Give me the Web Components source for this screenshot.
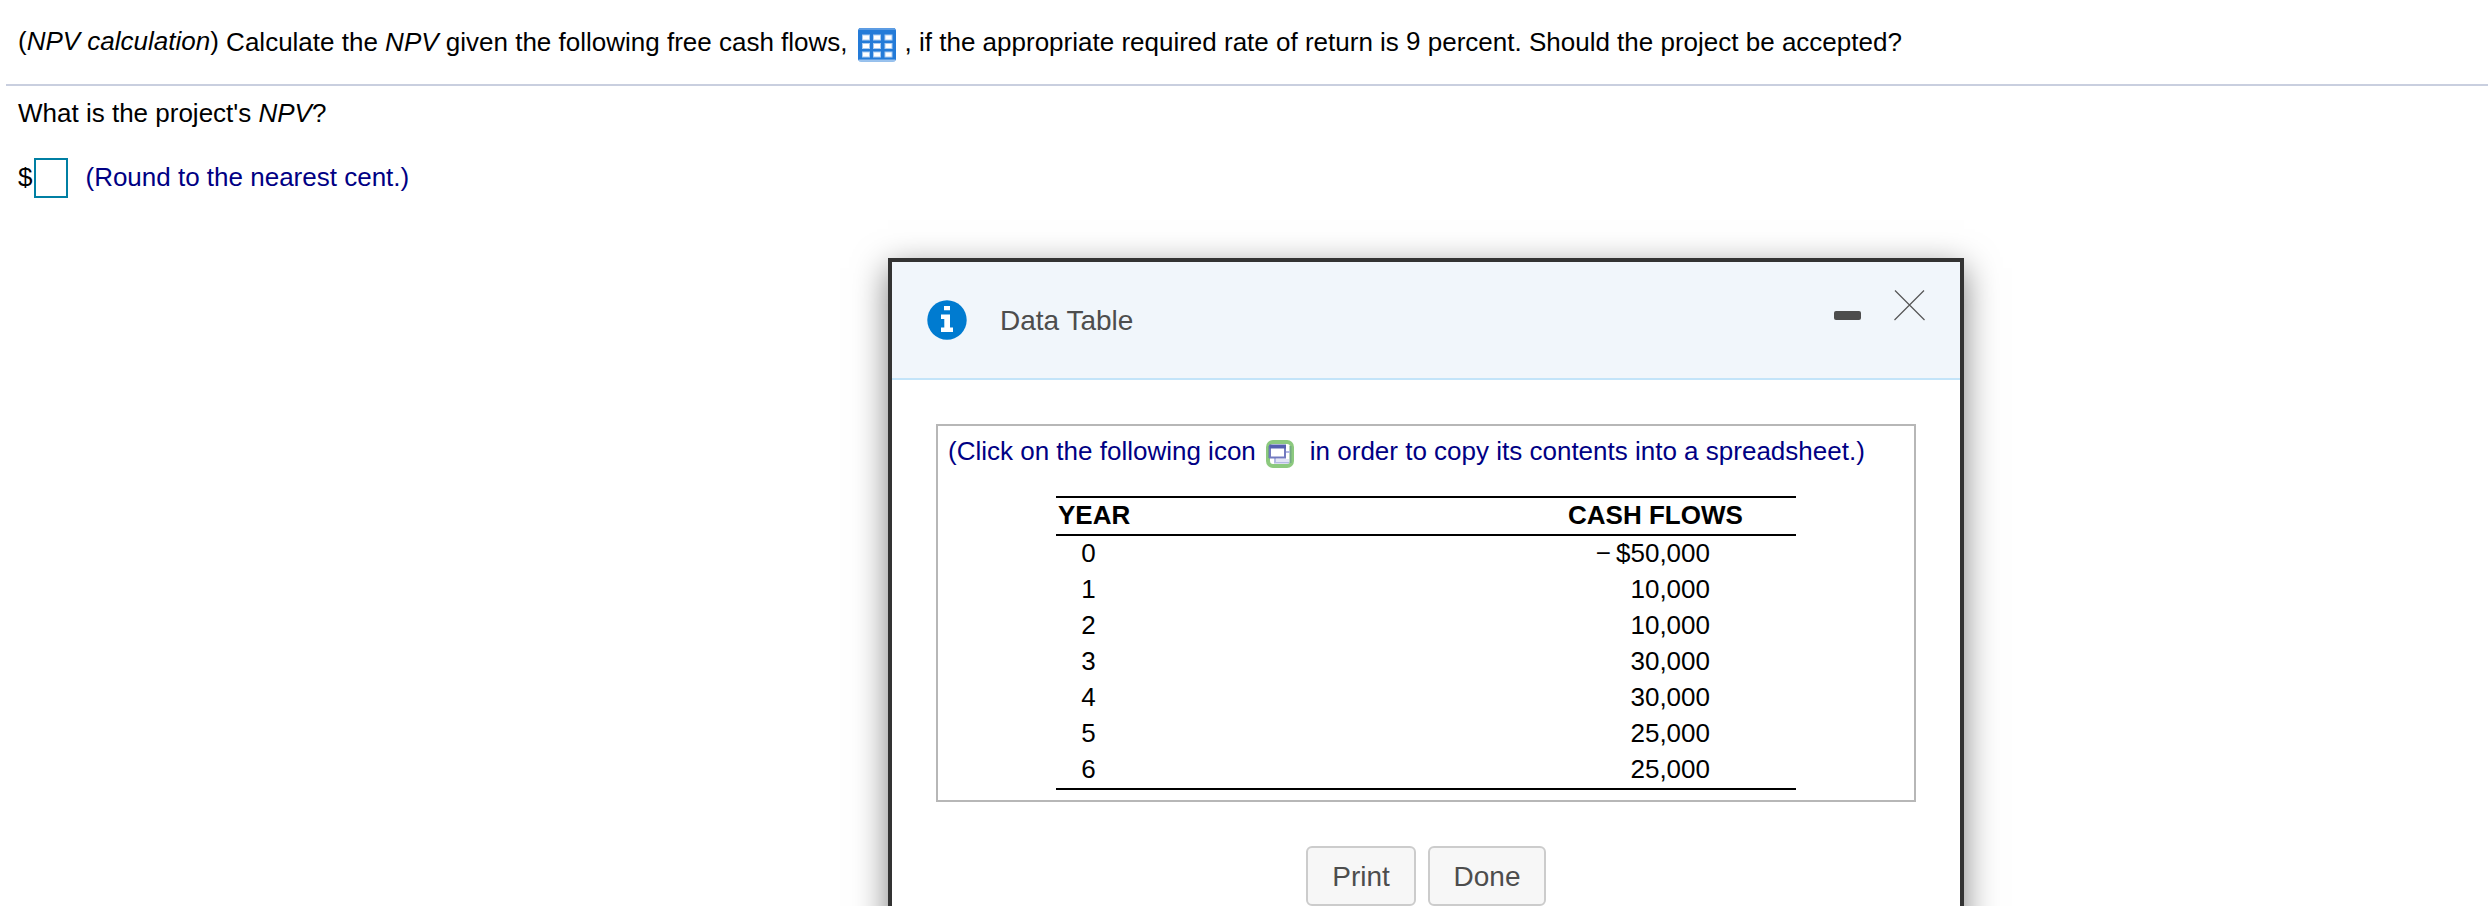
<!DOCTYPE html>
<html lang="en">
<head>
<meta charset="utf-8">
<title>NPV calculation</title>
<style>
html,body{margin:0;height:100%;overflow:hidden;background:#fff}
body{font:26px/36px "Liberation Sans",Arial,sans-serif;color:#000}
</style>
</head>
<body>
<npv-page></npv-page>
<script>
const define=(name,html)=>customElements.define(name,class extends HTMLElement{
  constructor(){super();const t=document.createElement('template');t.innerHTML=html;
  this.attachShadow({mode:'open'}).append(t.content.cloneNode(true));}
});

define('grid-icon',`<style>:host{display:block;white-space:normal;width:38px;height:34px}svg{display:block}</style>
<svg width="38" height="34" viewBox="0 0 38 34"><rect y="0" width="38" height="33.5" rx="3" fill="#247bd8"/><rect x="1" y="0" width="36" height="2" fill="#5c9ce3"/><rect x="1" y="31.5" width="36" height="2" fill="#9bc3ee"/>
<g fill="#fff" stroke="#a9cbf1" stroke-width="1"><rect x="4.500" y="7" width="7" height="5"/><rect x="15.500" y="7" width="7" height="5"/><rect x="27" y="7" width="7" height="5"/><rect x="4.500" y="15.500" width="7" height="5"/><rect x="15.500" y="15.500" width="7" height="5"/><rect x="27" y="15.500" width="7" height="5"/><rect x="4.500" y="24" width="7" height="5"/><rect x="15.500" y="24" width="7" height="5"/><rect x="27" y="24" width="7" height="5"/></g></svg>`);

define('copy-icon',`<style>:host{display:block;width:28px;height:28px}svg{display:block}</style>
<svg width="28" height="28" viewBox="0 0 28 28"><rect width="28" height="28" rx="7" fill="#8cc97e"/><rect x="4" y="4" width="20" height="20" rx="3" fill="#fff"/>
<path d="M24.500 6v17" stroke="#74ab84" stroke-width="2"/><path d="M20 12h4M9 18v4.500h14" fill="none" stroke="#b3b9e2" stroke-width="2"/><path d="M10 19h13v3H10z" fill="#e3e5f5"/><path d="M3 6v12" stroke="#74a58a" stroke-width="2"/><rect x="4" y="6" width="15" height="11.500" fill="#fff" stroke="#727ac0" stroke-width="2"/><path d="M3.500 6.500H20" stroke="#5560b0" stroke-width="4"/></svg>`);

define('info-icon',`<style>:host{display:block;width:40px;height:40px}svg{display:block}</style>
<svg width="40" height="40" viewBox="0 0 40 40"><circle cx="20" cy="20" r="19.7" fill="#007bd0"/><path fill="#fff" d="M17 6h6v4.200h-6zM14 14.500h9v13h3v4.500H14v-4.500h3.300v-8.500H14z"/></svg>`);

define('question-line',`<style>:host{display:block;height:84px;margin-left:6px;border-bottom:2px solid #c9cfdf;box-sizing:content-box}
p{margin:0;padding:24px 0 0 12px;display:flex;white-space:pre;align-items:flex-start}
.lift{margin-top:-1px}grid-icon{margin:4px 9px 0 10px}</style>
<p><span class="lift">(<i>NPV calculation</i>)</span><span> Calculate the <i>NPV</i> given the following free cash flows,</span><grid-icon></grid-icon><span>, if the appropriate required rate of return is </span><span class="lift">9</span><span> percent. Should the project be accepted?</span></p>`);

define('answer-area',`<style>:host{display:block;padding:9px 0 0 18px}
p{margin:0}.row{display:flex;align-items:flex-start;margin-top:27px}
.row span{margin-top:1px}.box{width:30px;height:36px;border:2px solid #007fa3;margin:0 17px 0 2px}.row .hint{color:#000084}</style>
<p>What is the project's <i>NPV</i>?</p><div class="row"><span>$</span><div class="box"></div><span class="hint">(Round to the nearest cent.)</span></div>`);

define('cash-table',`<style>:host{display:block;width:740px;margin:20px auto 0;border-top:2px solid;border-bottom:2px solid;height:290px}
.r{display:grid;grid-template-columns:65px 1fr;height:36px;line-height:34px}
.h{font-weight:bold;border-bottom:2px solid;padding:0 0 0 2px;grid-template-columns:1fr 228px}
.r>:first-child{text-align:center}.r>:last-child{text-align:right;padding-right:86px;white-space:pre}
.h>:first-child{text-align:left!important}.h>:last-child{text-align:left!important;padding:0!important}</style>
<div class="r h"><span>YEAR</span><span>CASH FLOWS</span></div>
${[['0','<span>−</span><span style="margin-left:5px">$50,000</span>'],['1','10,000'],['2','10,000'],['3','30,000'],['4','30,000'],['5','25,000'],['6','25,000']].map(r=>`<div class="r"><span>${r[0]}</span><span>${r[1]}</span></div>`).join('')}`);

define('dialog-button',`<style>:host{display:block;box-sizing:border-box;height:60px;border:2px solid #ccc;border-radius:6px;background:#f7f7f7;color:#4d4d4d;font-size:28px;line-height:57px;text-align:center}</style><slot></slot>`);

define('data-dialog',`<style>:host{display:block;box-sizing:border-box;width:1076px;height:760px;border:4px solid #333;background:#fff;box-shadow:0 10px 32px rgba(0,0,0,.5)}
header{display:flex;align-items:flex-start;height:116px;background:#f1f6fb;border-bottom:2px solid #c3e4f9}
info-icon{margin:38px 0 0 35px}h1{font:400 28px/36px "Liberation Sans",Arial,sans-serif;color:#4d4d4d;margin:41px 0 0 33px;flex:1}
.min{width:27px;height:9px;border-radius:2px;background:#4d4d4d;margin:49px 33px 0 0}.x{margin:28px 35px 0 0;display:block}
.box{margin:44px 44px 0;height:374px;border:2px solid #b7b7b7;color:#000}
.tip{display:flex;align-items:flex-start;margin:0;padding:7px 0 0 10px;color:#000084;height:43px}
copy-icon{margin:7px 16px 0 10px}
.buttons{display:flex;gap:12px;margin:44px 0 0 414px}.p{width:110px}.d{width:118px}</style>
<header><info-icon></info-icon><h1>Data Table</h1><div class="min"></div><svg class="x" width="31" height="31" viewBox="0 0 31 31"><path d="M1 0.500 30.500 30M30 0.500 0.500 30" stroke="#555" stroke-width="1.200"/></svg></header>
<div class="box"><p class="tip"><span>(Click on the following icon</span><copy-icon></copy-icon><span>in order to copy its contents into a spreadsheet.)</span></p><cash-table></cash-table></div>
<div class="buttons"><dialog-button class="p">Print</dialog-button><dialog-button class="d">Done</dialog-button></div>`);

define('npv-page',`<style>:host{display:block;position:relative;height:906px;overflow:hidden}data-dialog{position:absolute;left:888px;top:258px}</style>
<question-line></question-line><answer-area></answer-area><data-dialog></data-dialog>`);
</script>
</body>
</html>
